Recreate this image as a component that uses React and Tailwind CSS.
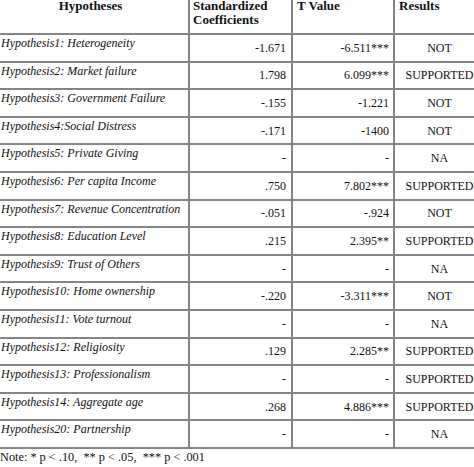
import React from "react";

const rows = [
  ["Hypothesis1: Heterogeneity", "-1.671", "-6.511***", "NOT"],
  ["Hypothesis2: Market failure", "1.798", "6.099***", "SUPPORTED"],
  ["Hypothesis3: Government Failure", "-.155", "-1.221", "NOT"],
  ["Hypothesis4:Social Distress", "-.171", "-1400", "NOT"],
  ["Hypothesis5: Private Giving", "-", "-", "NA"],
  ["Hypothesis6: Per capita Income", ".750", "7.802***", "SUPPORTED"],
  ["Hypothesis7: Revenue Concentration", "-.051", "-.924", "NOT"],
  ["Hypothesis8: Education Level", ".215", "2.395**", "SUPPORTED"],
  ["Hypothesis9: Trust of Others", "-", "-", "NA"],
  ["Hypothesis10: Home ownership", "-.220", "-3.311***", "NOT"],
  ["Hypothesis11: Vote turnout", "-", "-", "NA"],
  ["Hypothesis12: Religiosity", ".129", "2.285**", "SUPPORTED"],
  ["Hypothesis13: Professionalism", "-", "-", "SUPPORTED"],
  ["Hypothesis14: Aggregate age", ".268", "4.886***", "SUPPORTED"],
  ["Hypothesis20: Partnership", "-", "-", "NA"],
];

const App = () => {
  return (
    <div className="w-[474px] h-[467px] overflow-hidden bg-white text-[#111] font-['Liberation_Serif','Times_New_Roman',serif]">
      <div className="w-[484px]">
        {/* Header */}
        <div className="flex h-[35px] border-b-2 border-[#858585] text-[13px] font-bold leading-[14px]">
          <div className="w-[188px] shrink-0 pr-[7px] text-center">
            <div className="-mt-[1px]">Hypotheses</div>
          </div>
          <div className="w-[103px] shrink-0 border-l-2 border-[#858585] pl-[3px]">
            <div className="-mt-[1px]">
              Standardized
              <br />
              Coefficients
            </div>
          </div>
          <div className="w-[102px] shrink-0 border-l-2 border-[#858585] pl-[4px]">
            <div className="-mt-[1px]">T Value</div>
          </div>
          <div className="flex-1 border-l-2 border-[#858585] pl-[4px]">
            <div className="-mt-[1px]">Results</div>
          </div>
        </div>

        {/* Body */}
        {rows.map(([name, coef, tval, result]) => (
          <div
            key={name}
            className="flex h-[27.6px] border-b-2 border-[#858585] text-[12px] leading-[14px]"
          >
            <div className="w-[188px] shrink-0 pt-[1px] pl-[1px] italic whitespace-nowrap">
              {name}
            </div>
            <div className="w-[103px] shrink-0 border-l-2 border-[#858585] pr-[5px] flex items-center justify-end">
              {coef}
            </div>
            <div className="w-[102px] shrink-0 border-l-2 border-[#858585] pr-[4px] flex items-center justify-end">
              {tval}
            </div>
            <div className="flex-1 border-l-2 border-[#858585] flex items-center justify-center">
              {result}
            </div>
          </div>
        ))}

        {/* Note */}
        <div className="text-[12.3px] leading-[16px] whitespace-pre">
          {"Note: * p < .10,  ** p < .05,  *** p < .001"}
        </div>
      </div>
    </div>
  );
};

export default App;
